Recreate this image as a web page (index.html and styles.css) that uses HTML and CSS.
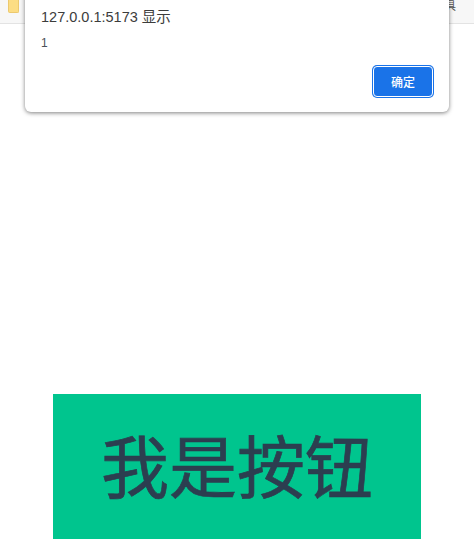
FILE: index.html
```html
<!DOCTYPE html>
<html lang="zh-CN">
<head>
  <meta charset="UTF-8">
  <meta name="viewport" content="width=device-width, initial-scale=1.0">
  <title>按钮</title>
  <link rel="stylesheet" href="styles.css">
</head>
<body>
  <!-- 浏览器书签栏 -->
  <div class="bookmarks">
    <span class="folder"></span>
    <span class="bookmark-name">具</span>
  </div>

  <!-- 页面内容 -->
  <main class="page">
    <button class="big-button">我是按钮</button>
  </main>

  <!-- alert 弹窗 -->
  <div class="dialog">
    <div class="dialog-title">127.0.0.1:5173 显示</div>
    <div class="dialog-message">1</div>
    <div class="dialog-actions">
      <button class="dialog-ok">确定</button>
    </div>
  </div>
</body>
</html>
```

FILE: styles.css
```css
html, body {
  height: 100%;
}
body {
  margin: 0;
  overflow: hidden;
  background-color: #fff;
  font-family: "Liberation Sans", "Noto Sans CJK SC", sans-serif;
}
.bookmarks {
  display: flex;
  justify-content: space-between;
  height: 24px;
  padding: 0 18px 0 8px;
  background-color: #f7f7f7;
  border-bottom: 1px solid #e3e3e3;
  box-sizing: border-box;
}
.folder {
  width: 11px;
  height: 13px;
  background-color: #fcdd84;
  border: 1px solid #ecc96e;
  border-top: none;
  border-radius: 0 0 2px 2px;
  box-sizing: border-box;
}
.bookmark-name {
  font-size: 11px;
  line-height: 13px;
  color: #555;
}
.page {
  display: flex;
  justify-content: center;
  padding-top: 370px;
}
.big-button {
  width: 368px;
  height: 145px;
  border: none;
  padding: 0 0 7px;
  background-color: #00c58e;
  color: #2c3e50;
  font-family: inherit;
  font-size: 68px;
  -webkit-text-stroke: 0.7px #2c3e50;
}
.dialog {
  position: absolute;
  top: -10px;
  left: 25px;
  width: 424px;
  height: 122px;
  padding: 18px 16px 0;
  box-sizing: border-box;
  background-color: #fff;
  border-radius: 0 0 6px 6px;
  box-shadow: 0 1px 4px rgba(0, 0, 0, 0.5);
}
.dialog-title {
  font-size: 14.5px;
  line-height: 18px;
  color: #3c3c3c;
}
.dialog-message {
  margin-top: 9px;
  font-size: 12px;
  line-height: 16px;
  color: #4a5058;
}
.dialog-actions {
  display: flex;
  justify-content: flex-end;
  margin-top: 15px;
}
.dialog-ok {
  width: 60px;
  height: 31px;
  padding: 0;
  border: 1px solid #fff;
  border-radius: 4px;
  background-color: #1a73e8;
  box-shadow: 0 0 0 1px #1a73e8;
  color: #fff;
  font-family: inherit;
  font-size: 12px;
  font-weight: 500;
}
```
